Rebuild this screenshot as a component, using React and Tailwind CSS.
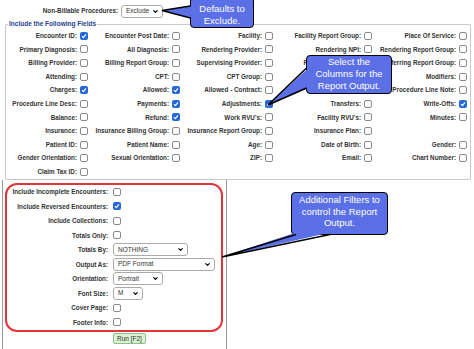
import { ChevronDown } from "lucide-react";

const fieldRows = [
  [["Encounter ID", true], ["Encounter Post Date"], ["Facility"], ["Facility Report Group"], ["Place Of Service"]],
  [["Primary Diagnosis"], ["All Diagnosis"], ["Rendering Provider"], ["Rendering NPI"], ["Rendering Report Group"]],
  [["Billing Provider"], ["Billing Report Group"], ["Supervising Provider"], ["Referring Provider"], ["Referring Report Group"]],
  [["Attending"], ["CPT"], ["CPT Group"], null, ["Modifiers"]],
  [["Charges", true], ["Allowed", true], ["Allowed - Contract"], null, ["Procedure Line Note"]],
  [["Procedure Line Desc"], ["Payments", true], ["Adjustments", true], ["Transfers"], ["Write-Offs", true]],
  [["Balance"], ["Refund", true], ["Work RVU's"], ["Facility RVU's"], ["Minutes"]],
  [["Insurance"], ["Insurance Billing Group"], ["Insurance Report Group"], ["Insurance Plan"], null],
  [["Patient ID"], ["Patient Name"], ["Age"], ["Date of Birth"], ["Gender"]],
  [["Gender Orientation"], ["Sexual Orientation"], ["ZIP"], ["Email"], ["Chart Number"]],
  [["Claim Tax ID"], null, null, null, null],
];

function Check({ on }) {
  if (on) {
    return (
      <span className="w-[8px] h-[8px] rounded-[2px] bg-[#2467d6] flex items-center justify-center shrink-0">
        <svg width="6" height="6" viewBox="0 0 6 6">
          <path d="M1 3.2 L2.4 4.6 L5 1.4" stroke="white" strokeWidth="1.2" fill="none" />
        </svg>
      </span>
    );
  }
  return <span className="w-[8px] h-[8px] rounded-[2px] border border-[#8a8a8a] bg-white shrink-0" />;
}

function Select({ text, w }) {
  return (
    <div className={"flex items-center justify-between h-[13px] border border-[#aaaaaa] rounded-[3px] bg-white pl-[4px] pr-[3px] text-[6.5px] text-[#333] " + w}>
      <span>{text}</span>
      <ChevronDown className="w-[7px] h-[7px] text-black" strokeWidth={4} />
    </div>
  );
}

function Row({ label, children }) {
  return (
    <div className="flex items-center h-[14.5px]">
      <span className="w-[101px] text-right font-bold whitespace-nowrap">{label}:</span>
      <div className="ml-[5px] flex items-center">{children}</div>
    </div>
  );
}

export default function App() {
  return (
    <div className="relative w-[474px] h-[349px] overflow-hidden bg-white text-[#333] font-['Liberation_Sans',Arial,sans-serif] text-[6.3px]">
      <div className="flex items-center h-[20px] pt-[2px]">
        <span className="w-[118px] text-right font-bold">Non-Billable Procedures:</span>
        <div className="ml-[3px]">
          <Select text="Exclude" w="w-[42px]" />
        </div>
      </div>

      <fieldset className="ml-[5px] w-[466px] border border-[#c9c9c9] rounded-[2px] p-0">
        <legend className="ml-[2px] px-[1px] text-[6.5px] leading-[8px] font-bold text-[#1f3f8f]">Include the Following Fields</legend>
        <div className="grid grid-cols-[82px_92px_93px_99px_95px] auto-rows-[13.6px] pt-[1px]">
          {fieldRows.map((row, i) =>
            row.map((cell, j) => (
              <div key={i + "-" + j} className="flex items-center justify-end gap-[3px] font-bold whitespace-nowrap">
                {cell && (
                  <>
                    <span>{cell[0]}:</span>
                    <Check on={cell[1]} />
                  </>
                )}
              </div>
            ))
          )}
        </div>
      </fieldset>

      <div className="ml-[2px] w-[225px] h-[170px] border-x border-[#9a9a9a] pt-[3px] pl-[2px]">
        <div className="w-[218px] rounded-[12px] border-2 border-[#e0353a]">
          <Row label="Include Incomplete Encounters"><Check /></Row>
          <Row label="Include Reversed Encounters"><Check on /></Row>
          <Row label="Include Collections"><Check /></Row>
          <Row label="Totals Only"><Check /></Row>
          <Row label="Totals By"><Select text="NOTHING" w="w-[75px]" /></Row>
          <Row label="Output As"><Select text="PDF Format" w="w-[102px]" /></Row>
          <Row label="Orientation"><Select text="Portrait" w="w-[50px]" /></Row>
          <Row label="Font Size"><Select text="M" w="w-[30px]" /></Row>
          <Row label="Cover Page"><Check /></Row>
          <Row label="Footer Info"><Check /></Row>
        </div>
        <div className="flex mt-[1px] ml-[108px]">
          <button className="h-[11px] px-[3px] border border-[#8fbf8f] bg-[#d9f2d0] rounded-[2px] text-[6.5px] leading-[9px] text-[#333]">Run [F2]</button>
        </div>
      </div>

      <div className="absolute left-[190px] top-[-3px] w-[64px] h-[31px] rounded-[4px] border-[1.5px] border-black bg-[#5b70e6] text-white text-[9.5px] leading-[12px] text-center pt-[5px]">
        <div>Defaults to</div>
        <div>Exclude.</div>
      </div>
      <div className="absolute left-[306px] top-[55px] w-[86px] h-[39px] rounded-[4px] border-[1.5px] border-black bg-[#5b70e6] text-white text-[9.5px] leading-[12px] text-center">
        <div>Select the</div>
        <div>Columns for the</div>
        <div>Report Output.</div>
      </div>
      <div className="absolute left-[291px] top-[192px] w-[97px] h-[43px] rounded-[4px] border-[1.5px] border-black bg-[#5b70e6] text-white text-[9.5px] leading-[11.5px] text-center pt-[1px]">
        <div>Additional Filters to</div>
        <div>control the Report</div>
        <div>Output.</div>
      </div>

      <svg className="absolute left-0 top-0 pointer-events-none" width="474" height="349">
        <polygon points="192.5,6 192.5,18 162,10.5" fill="#5b70e6" />
        <polyline points="190.5,6 162,10.5 190.5,18" fill="none" stroke="black" strokeWidth="1.5" />
        <polygon points="308.5,68 308.5,88 268,105" fill="#5b70e6" />
        <polyline points="306.5,68 268,105 306.5,88" fill="none" stroke="black" strokeWidth="1.5" />
        <polygon points="296,232.5 330,232.5 222,257" fill="#5b70e6" />
        <polyline points="296,234.5 222,257 330,234.5" fill="none" stroke="black" strokeWidth="1.5" />
      </svg>
    </div>
  );
}
